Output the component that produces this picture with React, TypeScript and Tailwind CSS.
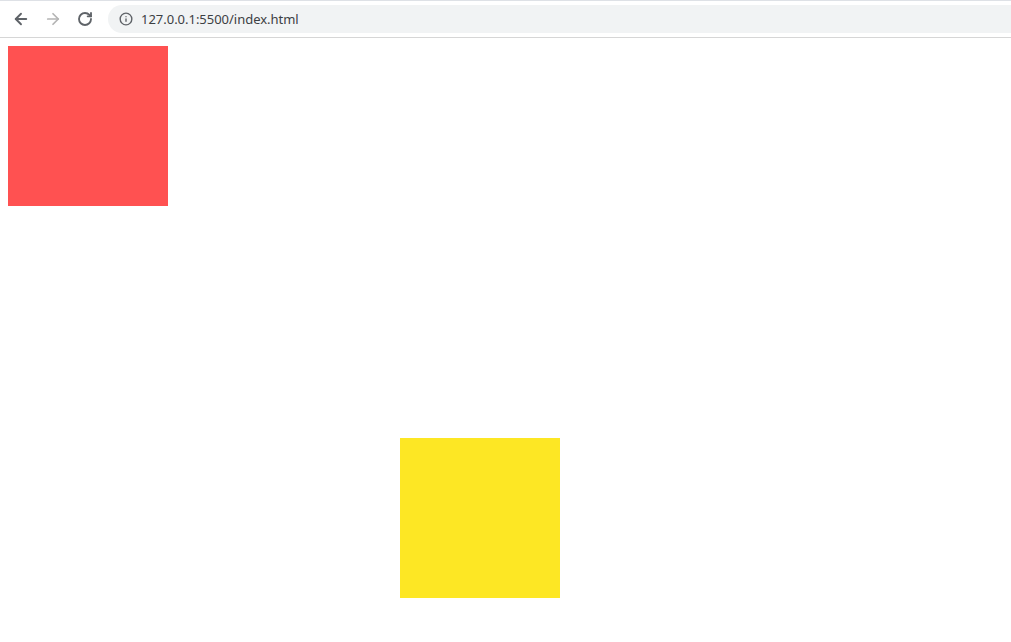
import { ArrowLeft, ArrowRight, RotateCw, Info } from 'lucide-react'

export default function App() {
  return (
    <div className="w-[1011px] h-[642px] bg-white overflow-hidden">
      {/* Browser toolbar */}
      <div className="h-[38px] flex items-center border-t border-t-[#dee1e6] border-b border-b-[#d6d6d6] bg-white">
        <div className="flex items-center pl-[12px]">
          <button type="button" className="w-[18px] h-[18px] flex items-center justify-center text-[#5f6368]">
            <ArrowLeft className="w-[18px] h-[18px]" strokeWidth={2.5} />
          </button>
          <button type="button" className="ml-[14px] w-[18px] h-[18px] flex items-center justify-center text-[#b4b4b4]">
            <ArrowRight className="w-[18px] h-[18px]" strokeWidth={2.3} />
          </button>
          <button type="button" className="ml-[14px] w-[18px] h-[18px] flex items-center justify-center text-[#5f6368]">
            <RotateCw className="w-[16px] h-[16px]" strokeWidth={2.8} />
          </button>
        </div>
        <div className="ml-[14px] flex-1 h-[28px] rounded-l-full bg-[#f1f3f4] flex items-center pl-[11px]">
          <Info className="w-[14px] h-[14px] text-[#5f6368]" strokeWidth={2.4} />
          <span
            className="ml-[8px] text-[13px] tracking-[-0.02px] text-[#3c4043] leading-none"
            style={{ fontFamily: '"Noto Sans", "Open Sans", sans-serif' }}
          >
            127.0.0.1:5500/index.html
          </span>
        </div>
      </div>

      {/* Page */}
      <div className="p-[8px]">
        <div className="w-[160px] h-[160px] bg-[#ff5151]" />
        <div className="ml-[392px] mt-[232px] w-[160px] h-[160px] bg-[#fde724]" />
      </div>
    </div>
  )
}
